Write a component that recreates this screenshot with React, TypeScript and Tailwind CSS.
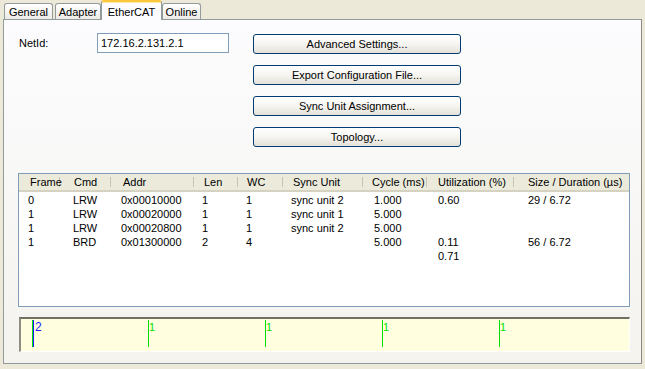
import React from 'react';

const cols = [
  { w: 41, h: 'Frame', hp: 11, dp: 9 },
  { w: 51, h: 'Cmd', hp: 14, dp: 13 },
  { w: 83, h: 'Addr', hp: 12, dp: 10 },
  { w: 44, h: 'Len', hp: 10, dp: 8 },
  { w: 45, h: 'WC', hp: 9, dp: 8 },
  { w: 80, h: 'Sync Unit', hp: 10, dp: 8 },
  { w: 64, h: 'Cycle (ms)', hp: 9, dp: 11 },
  { w: 87, h: 'Utilization (%)', hp: 11, dp: 11 },
  { w: 112, h: 'Size / Duration (µs)', hp: 14, dp: 14 },
];

const rows = [
  ['0', 'LRW', '0x00010000', '1', '1', 'sync unit 2', '1.000', '0.60', '29 / 6.72'],
  ['1', 'LRW', '0x00020000', '1', '1', 'sync unit 1', '5.000', '', ''],
  ['1', 'LRW', '0x00020800', '1', '1', 'sync unit 2', '5.000', '', ''],
  ['1', 'BRD', '0x01300000', '2', '4', '', '5.000', '0.11', '56 / 6.72'],
  ['', '', '', '', '', '', '', '0.71', ''],
];

const buttons = ['Advanced Settings...', 'Export Configuration File...', 'Sync Unit Assignment...', 'Topology...'];

// x offset inside the timeline, label
const marks = [
  { x: 129, n: '1' },
  { x: 246, n: '1' },
  { x: 363, n: '1' },
  { x: 480, n: '1' },
];

function Tab({ label, w, active }: { label: string; w: string; active?: boolean }) {
  if (active) {
    return (
      <div
        className={`${w} h-[20px] -mb-px relative z-10 flex items-start justify-center pt-[3px] bg-[#FCFCFE] border-x border-[#919B9C] rounded-t-[3px] border-t-2 border-t-[#FFC83C] shadow-[inset_0_1px_0_#FFE8A6]`}
      >
        {label}
      </div>
    );
  }
  return (
    <div
      className={`${w} h-[16px] flex items-center justify-center pt-px bg-gradient-to-b from-white to-[#ECEBE6] border border-b-0 border-[#919B9C] rounded-t-[3px]`}
    >
      {label}
    </div>
  );
}

export default function App() {
  return (
    <div
      className="w-[645px] h-[369px] bg-[#ECE9D8] text-[11px] leading-[14px] text-black overflow-hidden"
      style={{ fontFamily: '"Liberation Sans", Arial, sans-serif' }}
    >
      {/* Tabs */}
      <div className="h-[19px] flex items-end pl-[4px]">
        <Tab label="General" w="w-[49px]" />
        <div className="w-[2px]" />
        <Tab label="Adapter" w="w-[46px]" />
        <Tab label="EtherCAT" w="w-[61px]" active />
        <Tab label="Online" w="w-[39px]" />
      </div>

      {/* Page */}
      <div className="ml-[3px] w-[639px] h-[345px] border border-[#919B9C] border-r-[#8C8A80] bg-gradient-to-b from-[#FCFCFE] to-[#F4F3EE]">
        {/* Top area */}
        <div className="flex pt-[13px]">
          <div className="flex items-start">
            <div className="w-[93px] pl-[15px] pt-[3px]">NetId:</div>
            <div className="w-[132px] h-[20px] bg-white border border-[#7F9DB9] pl-[3px] flex items-center">
              172.16.2.131.2.1
            </div>
          </div>
          <div className="ml-[24px] mt-px flex flex-col gap-[11px]">
            {buttons.map((b) => (
              <div
                key={b}
                className="w-[208px] h-[20px] flex items-center justify-center rounded-[3px] border border-[#003C74] bg-gradient-to-b from-white via-[#F6F5F1] to-[#E3E1D8]"
              >
                {b}
              </div>
            ))}
          </div>
        </div>

        {/* Frame table */}
        <div className="ml-[14px] mt-[26px] w-[612px] h-[134px] border border-[#7F9DB9] bg-white">
          <div className="flex h-[18px] bg-[#EBEADB] border-b-2 border-[#D6D2C2]">
            {cols.map((c, i) => (
              <div
                key={c.h}
                style={{ width: c.w, paddingLeft: c.hp }}
                className={`flex items-center whitespace-nowrap ${i < cols.length - 1 ? 'border-r border-[#C7C5B2] my-[3px]' : ''}`}
              >
                {c.h}
              </div>
            ))}
          </div>
          <div className="pt-[1px]">
            {rows.map((r, ri) => (
              <div key={ri} className="flex h-[14px]">
                {r.map((v, ci) => (
                  <div
                    key={ci}
                    style={{ width: cols[ci].w, paddingLeft: cols[ci].dp }}
                    className="whitespace-nowrap"
                  >
                    {v}
                  </div>
                ))}
              </div>
            ))}
          </div>
        </div>

        {/* Timeline */}
        <div className="relative ml-[15px] mt-[10px] w-[611px] h-[35px] bg-[#FFFEDF] border-t-2 border-l-2 border-t-[#716F64] border-l-[#8F8D82] border-b border-r border-b-white border-r-white">
          <div className="absolute left-[11px] top-[1px] w-px h-[27px] bg-[#00E000]" />
          <div className="absolute left-[12px] top-[1px] w-px h-[27px] bg-[#1A1AFF]" />
          <div className="absolute left-[14px] top-[2px] text-[12px] leading-[12px] text-[#1A1AFF]">2</div>
          {marks.map((m) => (
            <React.Fragment key={m.x}>
              <div className="absolute top-[1px] w-px h-[27px] bg-[#00E000]" style={{ left: m.x - 2 }} />
              <div
                className="absolute top-[3px] text-[11px] leading-[11px] text-[#00E000]"
                style={{ left: m.x - 1 }}
              >
                {m.n}
              </div>
            </React.Fragment>
          ))}
        </div>
      </div>
    </div>
  );
}
